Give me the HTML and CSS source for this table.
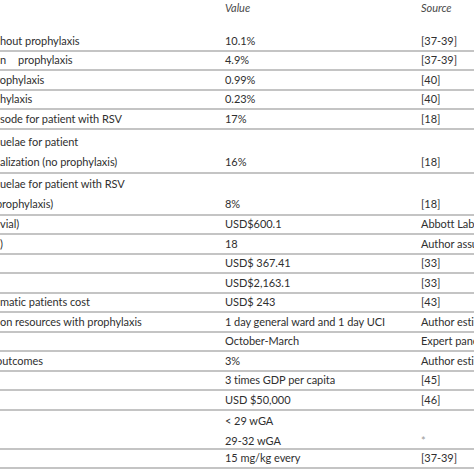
FILE: index.html
```html
<!DOCTYPE html>
<html>
<head>
<meta charset="utf-8">
<link rel="stylesheet" href="styles.css">
</head>
<body>
<div class="table">
  <div class="head">
    <div></div><div class="hc">Value</div><div class="hc">Source</div>
  </div>
  <div class="row"><div>hout prophylaxis</div><div>10.1%</div><div>[37-39]</div></div>
  <div class="row"><div>n<span class="gap">prophylaxis</span></div><div>4.9%</div><div>[37-39]</div></div>
  <div class="row"><div class="cut">rophylaxis</div><div>0.99%</div><div>[40]</div></div>
  <div class="row"><div>hylaxis</div><div>0.23%</div><div>[40]</div></div>
  <div class="row"><div>sode for patient with RSV</div><div>17%</div><div>[18]</div></div>
  <div class="row dbl d1">
    <div><div class="ln">uelae for patient</div><div class="ln">alization (no prophylaxis)</div></div>
    <div><div class="ln">&nbsp;</div><div class="ln">16%</div></div>
    <div><div class="ln">&nbsp;</div><div class="ln">[18]</div></div>
  </div>
  <div class="row dbl d2">
    <div><div class="ln">uelae for patient with RSV</div><div class="ln cut">prophylaxis)</div></div>
    <div><div class="ln">&nbsp;</div><div class="ln">8%</div></div>
    <div><div class="ln">&nbsp;</div><div class="ln">[18]</div></div>
  </div>
  <div class="row"><div>vial)</div><div>USD$600.1</div><div>Abbott Laboratories</div></div>
  <div class="row"><div>)</div><div>18</div><div>Author assumption</div></div>
  <div class="row"><div></div><div>USD$ 367.41</div><div>[33]</div></div>
  <div class="row"><div></div><div>USD$2,163.1</div><div>[33]</div></div>
  <div class="row"><div>matic patients cost</div><div>USD$ 243</div><div>[43]</div></div>
  <div class="row"><div>on resources with prophylaxis</div><div>1 day general ward and 1 day UCI</div><div>Author estimation</div></div>
  <div class="row"><div></div><div>October-March</div><div>Expert panel</div></div>
  <div class="row"><div class="cut">outcomes</div><div>3%</div><div>Author estimation</div></div>
  <div class="row"><div></div><div>3 times GDP per capita</div><div>[45]</div></div>
  <div class="row"><div></div><div>USD $50,000</div><div>[46]</div></div>
  <div class="row dbl d3">
    <div><div class="ln">&nbsp;</div><div class="ln">&nbsp;</div></div>
    <div><div class="ln">&lt; 29 wGA</div><div class="ln">29-32 wGA</div></div>
    <div><div class="ln">&nbsp;</div><div class="ln star">*</div></div>
  </div>
  <div class="row"><div></div><div>15 mg/kg every</div><div>[37-39]</div></div>
</div>
</body>
</html>
```
FILE: styles.css
```css
html, body {
  margin: 0;
  padding: 0;
  background: #ffffff;
}
body {
  width: 474px;
  height: 474px;
  overflow: hidden;
  font-family: Lato, "Open Sans", sans-serif;
  font-size: 11px;
  letter-spacing: -0.05px;
  color: #2f2f2f;
}
.table {
  width: 474px;
  overflow: hidden;
}
.head, .row {
  display: grid;
  grid-template-columns: 225px 196px 300px;
  white-space: nowrap;
}
.head {
  height: 32px;
  line-height: 16px;
}
.hc {
  font-style: italic;
  color: #4a4a4a;
}
.row {
  height: 19.5px;
  box-sizing: border-box;
  border-bottom: 2px solid #c4c4c4;
  align-items: center;
  line-height: 14px;
}
.dbl {
  align-items: start;
}
.dbl .ln {
  line-height: 20px;
}
.d1 {
  height: 44px;
  padding-top: 2px;
}
.d2 {
  height: 42px;
}
.d3 {
  height: 39px;
}
.cut {
  margin-left: -4px;
}
.gap {
  margin-left: 12px;
}
.star {
  color: #999;
}
```
